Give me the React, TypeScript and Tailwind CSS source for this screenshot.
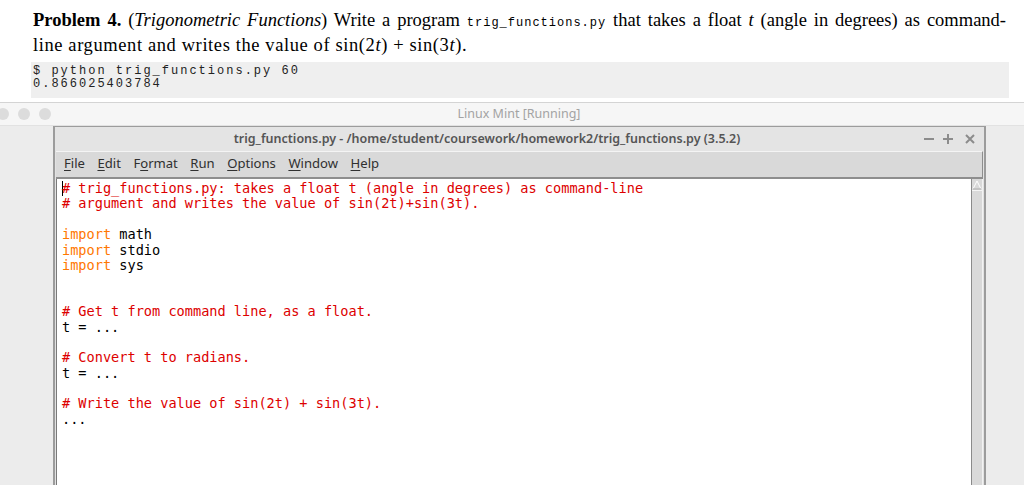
import * as React from 'react'

const serif = { fontFamily: '"Liberation Serif", serif' }

type Tok = { t: string; c?: 'cm' | 'kw' }
const code: Tok[][] = [
  [{ t: '# trig_functions.py: takes a float t (angle in degrees) as command-line', c: 'cm' }],
  [{ t: '# argument and writes the value of sin(2t)+sin(3t).', c: 'cm' }],
  [],
  [{ t: 'import', c: 'kw' }, { t: ' math' }],
  [{ t: 'import', c: 'kw' }, { t: ' stdio' }],
  [{ t: 'import', c: 'kw' }, { t: ' sys' }],
  [],
  [],
  [{ t: '# Get t from command line, as a float.', c: 'cm' }],
  [{ t: 't = ...' }],
  [],
  [{ t: '# Convert t to radians.', c: 'cm' }],
  [{ t: 't = ...' }],
  [],
  [{ t: '# Write the value of sin(2t) + sin(3t).', c: 'cm' }],
  [{ t: '...' }],
  [],
  [],
]

function Menu({ pre, u, post }: { pre?: string; u: string; post: string }) {
  return (
    <span>
      {pre}
      <span className="underline underline-offset-2">{u}</span>
      {post}
    </span>
  )
}

export default function App() {
  return (
    <div className="w-[1024px] h-[485px] overflow-hidden bg-white flex flex-col">
      {/* problem statement */}
      <div className="pl-[33px] pr-[18px] pt-[9px] text-[18.5px] leading-[22px] text-black" style={serif}>
        <div className="text-justify [text-align-last:justify]">
          <b>Problem 4.</b> (<i>Trigonometric Functions</i>) Write a program{' '}
          <span className="text-[12px] tracking-[1px]" style={{ fontFamily: '"Liberation Mono", monospace' }}>
            trig_functions.py
          </span>{' '}
          that takes a float <i>t</i> (angle in degrees) as command-
        </div>
        <div className="tracking-[0.6px]">
          line argument and writes the value of sin(2<i>t</i>) + sin(3<i>t</i>).
        </div>
      </div>

      <div
        className="mt-[6px] ml-[31px] mr-[15px] h-[36px] bg-[#efefef] pl-[2px] pt-[3px] text-[12px] leading-[12.5px] tracking-[2px] text-[#222]"
        style={{ fontFamily: '"Liberation Mono", monospace' }}
      >
        <div className="whitespace-pre">$ python trig_functions.py 60</div>
        <div>0.866025403784</div>
      </div>

      {/* VM window */}
      <div className="mt-[4px] flex-1 flex flex-col border-t border-[#d4d4d4]">
        <div className="h-[23px] bg-[#f6f6f6] flex items-center border-b border-[#e2e2e2]">
          <div className="w-[54px] flex items-center gap-[9px] -ml-[3px]">
            <span className="w-[12px] h-[12px] rounded-full bg-[#dcdcdc]" />
            <span className="w-[12px] h-[12px] rounded-full bg-[#dcdcdc]" />
            <span className="w-[12px] h-[12px] rounded-full bg-[#dcdcdc]" />
          </div>
          <div
            className="flex-1 text-center text-[12.5px] text-[#a3a3a3]"
            style={{ fontFamily: '"Noto Sans", sans-serif' }}
          >
            Linux Mint [Running]
          </div>
          <div className="w-[37px]" />
        </div>

        <div className="flex-1 flex bg-[#ececec]">
          <div className="w-[53px]" />
          {/* IDLE window */}
          <div className="w-[933px] flex flex-col border-l-2 border-r-2 border-t border-[#9c9c9c] bg-[#e2e2e2]">
            <div className="h-[24px] flex items-center bg-[#e4e4e4]" style={{ fontFamily: '"Noto Sans", sans-serif' }}>
              <div className="flex-1 text-center text-[12.5px] font-semibold text-[#555]">
                trig_functions.py - /home/student/coursework/homework2/trig_functions.py (3.5.2)
              </div>
              <div className="w-[65px] flex items-center gap-[7px] pl-[4px]">
                <svg width="12" height="12" viewBox="0 0 12 12">
                  <path d="M1 6h10" stroke="#8c8c8c" strokeWidth="2" />
                </svg>
                <svg width="12" height="12" viewBox="0 0 12 12">
                  <path d="M1 6h10M6 1v10" stroke="#8c8c8c" strokeWidth="2" />
                </svg>
                <svg width="12" height="12" viewBox="0 0 12 12" className="ml-[3px]">
                  <path d="M2 2l8 8M10 2l-8 8" stroke="#8c8c8c" strokeWidth="2" />
                </svg>
              </div>
            </div>

            <div className="mx-[1px] h-[28px] flex items-center gap-[12.5px] pl-[8px] pb-[2px] bg-[#d9d9d9] border-t border-[#f4f4f4] border-b-2 border-b-[#8e8e8e] border-r border-r-[#8e8e8e] text-[13.1px] text-[#303030]" style={{ fontFamily: '"Noto Sans", sans-serif' }}>
              <Menu u="F" post="ile" />
              <Menu u="E" post="dit" />
              <Menu pre="F" u="o" post="rmat" />
              <Menu u="R" post="un" />
              <Menu u="O" post="ptions" />
              <Menu u="W" post="indow" />
              <Menu u="H" post="elp" />
            </div>

            <div className="flex-1 flex mx-[1px] bg-white border-l border-[#7a7a7a]">
              <div
                className="flex-1 pl-[5px] pt-[2px] text-[13.6px] leading-[15.4px] text-black"
                style={{ fontFamily: '"DejaVu Sans Mono", monospace' }}
              >
                {code.map((line, i) => (
                  <div key={i} className="h-[15.4px] whitespace-pre flex">
                    {i === 0 && <span className="w-[1px] h-[15px] bg-black -mr-[1px]" />}
                    {line.map((tok, j) => (
                      <span
                        key={j}
                        className={tok.c === 'cm' ? 'text-[#dd0000]' : tok.c === 'kw' ? 'text-[#ff7700]' : ''}
                      >
                        {tok.t}
                      </span>
                    ))}
                  </div>
                ))}
              </div>
              {/* scrollbar */}
              <div className="w-[12px] bg-[#d9d9d9] border-l border-[#8a8a8a] border-r border-r-[#f2f2f2] flex flex-col">
                <div className="h-[12px] flex items-center justify-center border-b border-[#f4f4f4]">
                  <svg width="10" height="10" viewBox="0 0 10 10">
                    <path d="M5 1L9 9H1Z" fill="#d9d9d9" stroke="#ffffff" strokeWidth="1" />
                    <path d="M9 9H1" stroke="#9a9a9a" strokeWidth="1" />
                  </svg>
                </div>
              </div>
            </div>
          </div>
        </div>
      </div>
    </div>
  )
}
